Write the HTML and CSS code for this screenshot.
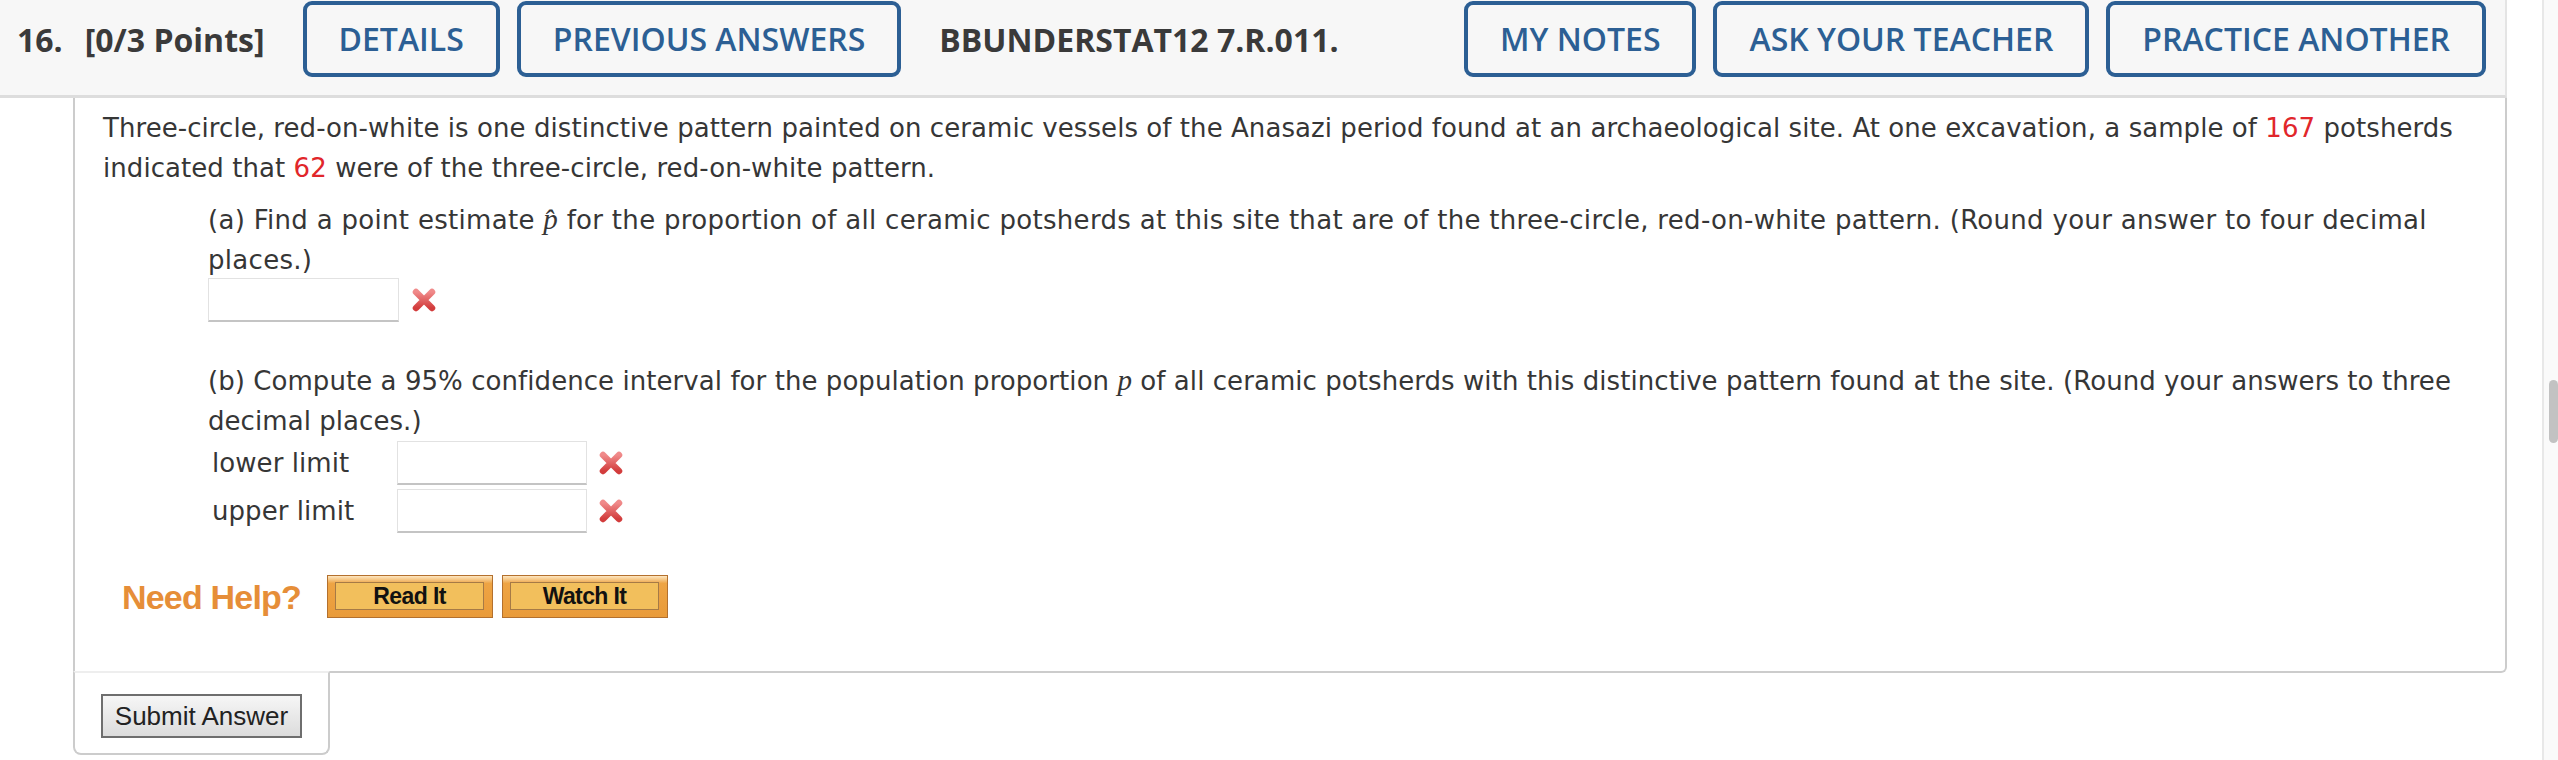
FILE: index.html
```html
<!DOCTYPE html>
<html lang="en">
<head>
<meta charset="utf-8">
<title>Question 16</title>
<link rel="stylesheet" href="styles.css">
</head>
<body>
<div class="page">
  <div class="main">
    <div class="qhead">
      <span class="qnum">16.</span>
      <span class="qpts">[0/3 Points]</span>
      <button class="hbtn">DETAILS</button>
      <button class="hbtn">PREVIOUS ANSWERS</button>
      <span class="qcode">BBUNDERSTAT12 7.R.011.</span>
      <div class="hright">
        <button class="hbtn">MY NOTES</button>
        <button class="hbtn">ASK YOUR TEACHER</button>
        <button class="hbtn">PRACTICE ANOTHER</button>
      </div>
    </div>
    <div class="qbody">
      <p class="lead">Three-circle, red-on-white is one distinctive pattern painted on ceramic vessels of the Anasazi period found at an archaeological site. At one excavation, a sample of <span class="red">167</span> potsherds indicated that <span class="red">62</span> were of the three-circle, red-on-white pattern.</p>
      <div class="part part-a">
        <p>(a) Find a point estimate <i class="math">p&#770;</i> for the proportion of all ceramic potsherds at this site that are of the three-circle, red-on-white pattern. (Round your answer to four decimal places.)</p>
        <div class="ans">
          <span class="field"></span>
          <svg class="xmark" viewBox="0 0 26 26" width="26" height="26"><defs><linearGradient id="xg1" x1="0" y1="0" x2="0" y2="1"><stop offset="0" stop-color="#f08a8a"/><stop offset="1" stop-color="#d23c3c"/></linearGradient></defs><path d="M5 5 L21 21 M21 5 L5 21" stroke="url(#xg1)" stroke-width="6.5" stroke-linecap="round" fill="none"/></svg>
        </div>
      </div>
      <div class="part part-b">
        <p>(b) Compute a 95% confidence interval for the population proportion <i class="math">p</i> of all ceramic potsherds with this distinctive pattern found at the site. (Round your answers to three decimal places.)</p>
        <div class="limits">
          <div class="lrow">
            <span class="llabel">lower limit</span>
            <span class="field"></span>
            <svg class="xmark" viewBox="0 0 26 26" width="26" height="26"><defs><linearGradient id="xg2" x1="0" y1="0" x2="0" y2="1"><stop offset="0" stop-color="#f08a8a"/><stop offset="1" stop-color="#d23c3c"/></linearGradient></defs><path d="M5 5 L21 21 M21 5 L5 21" stroke="url(#xg2)" stroke-width="6.5" stroke-linecap="round" fill="none"/></svg>
          </div>
          <div class="lrow">
            <span class="llabel">upper limit</span>
            <span class="field"></span>
            <svg class="xmark" viewBox="0 0 26 26" width="26" height="26"><defs><linearGradient id="xg3" x1="0" y1="0" x2="0" y2="1"><stop offset="0" stop-color="#f08a8a"/><stop offset="1" stop-color="#d23c3c"/></linearGradient></defs><path d="M5 5 L21 21 M21 5 L5 21" stroke="url(#xg3)" stroke-width="6.5" stroke-linecap="round" fill="none"/></svg>
          </div>
        </div>
      </div>
      <div class="help">
        <span class="help-label">Need Help?</span>
        <span class="help-btn"><span class="help-inner">Read It</span></span>
        <span class="help-btn"><span class="help-inner">Watch It</span></span>
      </div>
    </div>
    <div class="submit-tab">
      <button class="submit">Submit Answer</button>
    </div>
  </div>
  <div class="scroll"><div class="thumb"></div></div>
</div>
</body>
</html>
```

FILE: styles.css
```css
* { box-sizing: border-box; }
html, body { margin: 0; padding: 0; background: #fff; }
body { width: 2558px; height: 760px; overflow: hidden; }

.page { display: flex; width: 2558px; height: 760px; }
.main { flex: 1; padding-right: 35px; }

.qhead {
  display: flex;
  align-items: center;
  height: 98px;
  padding: 0 19px 17px 17px;
  background: #f7f7f7;
  border-bottom: 3px solid #dddddd;
  border-right: 2px solid #e4e4e4;
  font-family: "Open Sans", "DejaVu Sans", sans-serif;
  font-size: 32px;
  color: #3a3a3a;
}
.qnum { font-weight: 700; }
.qpts { font-weight: 700; margin-left: 22px; }
.qcode { font-weight: 700; margin-left: 38px; }

.hbtn {
  height: 76px;
  padding: 0 32px;
  border: 4px solid #2c5f94;
  border-radius: 9px;
  background: #f7f7f7;
  color: #2c5f94;
  font-family: "Open Sans", "DejaVu Sans", sans-serif;
  font-weight: 600;
  font-size: 32px;
  line-height: 1;
  margin-left: 17px;
}
.qpts + .hbtn { margin-left: 38px; }
.hright { margin-left: auto; display: flex; }
.hright .hbtn:first-child { margin-left: 0; }

.qbody {
  margin-left: 73px;
  border-left: 2px solid #cccccc;
  border-right: 2px solid #cccccc;
  border-bottom: 2px solid #cccccc;
  border-bottom-right-radius: 6px;
  padding: 10px 16px 53px 28px;
  font-family: "DejaVu Sans", Verdana, sans-serif;
  font-size: 26px;
  line-height: 40px;
  letter-spacing: 0.06px;
  color: #363636;
}
.qbody p { margin: 0; }
.red { color: #e1262b; }
.math { font-family: "Liberation Serif", "DejaVu Serif", serif; font-style: italic; font-size: 29px; line-height: 1; }

.part { margin-left: 105px; }
.part-a { margin-top: 12px; }
.part-a p { letter-spacing: 0.3px; }
.part-b { margin-top: 39px; }

.ans { display: flex; align-items: center; gap: 12px; margin-top: -2px; height: 44px; }
.field {
  display: block;
  width: 191px;
  height: 44px;
  background: #fff;
  border: 1px solid #e2e2e2;
  border-bottom: 2px solid #c4c4c4;
}
.xmark { display: block; flex: none; }

.limits { display: flex; flex-direction: column; gap: 4px; }
.lrow { display: flex; align-items: center; height: 44px; }
.llabel { width: 189px; padding-left: 4px; }
.lrow .field { width: 190px; }
.lrow .xmark { margin-left: 11px; }

.help { display: flex; align-items: center; margin: 42px 0 0 19px; height: 43px; }
.help-label {
  font-family: "Liberation Sans", Arial, sans-serif;
  font-weight: 700;
  font-size: 34px;
  color: #e68e38;
  margin-right: 26px;
  letter-spacing: -0.8px;
}
.help-btn {
  display: block;
  width: 166px;
  height: 43px;
  padding: 6px 8px 7px 7px;
  border: 1px solid #b3702e;
  background: linear-gradient(#fde6c0 0, #eea444 18%, #e99b3a 100%);
  margin-right: 9px;
}
.help-inner {
  display: block;
  height: 100%;
  border: 1px solid #a67a46;
  background: #f2bf5c;
  font-family: "Liberation Sans", Arial, sans-serif;
  font-weight: 700;
  font-size: 23px;
  line-height: 27px;
  text-align: center;
  color: #111;
  letter-spacing: -0.6px;
}

.submit-tab {
  width: 257px;
  margin: -2px 0 0 73px;
  height: 84px;
  padding: 21px 26px 0 26px;
  border: 2px solid #cccccc;
  border-top: 2px solid #eeeeee;
  border-radius: 0 0 8px 8px;
  background: #fff;
}
.submit {
  display: block;
  width: 201px;
  height: 44px;
  padding: 0;
  border: 2px solid #6e6e6e;
  background: linear-gradient(#f6f6f6, #dcdcdc);
  font-family: "Liberation Sans", Arial, sans-serif;
  font-size: 26px;
  color: #222;
}

.scroll {
  width: 16px;
  height: 760px;
  background: #fafafa;
  border-left: 2px solid #e8e8e8;
  padding: 380px 0 0 5px;
}
.thumb {
  width: 9px;
  height: 63px;
  border-radius: 5px;
  background: #c2c2c2;
}
```
